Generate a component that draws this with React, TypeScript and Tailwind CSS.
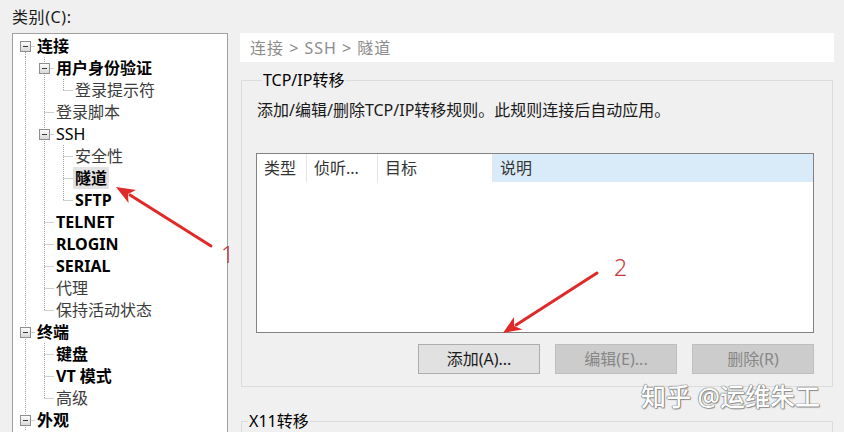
import React from 'react';

type Row = {
  text: string;
  level: number;
  cols: string[];
  box?: boolean;
  bold?: boolean;
  dim?: boolean;
  selected?: boolean;
};

const rows: Row[] = [
  { text: '连接', level: 0, cols: ['D'], box: true, bold: true },
  { text: '用户身份验证', level: 1, cols: ['I', 'T'], box: true, bold: true },
  { text: '登录提示符', level: 2, cols: ['I', 'I', 'L'], dim: true },
  { text: '登录脚本', level: 1, cols: ['I', 'T'], dim: true },
  { text: 'SSH', level: 1, cols: ['I', 'T'], box: true },
  { text: '安全性', level: 2, cols: ['I', 'I', 'T'], dim: true },
  { text: '隧道', level: 2, cols: ['I', 'I', 'T'], bold: true, selected: true },
  { text: 'SFTP', level: 2, cols: ['I', 'I', 'L'], bold: true },
  { text: 'TELNET', level: 1, cols: ['I', 'T'], bold: true },
  { text: 'RLOGIN', level: 1, cols: ['I', 'T'], bold: true },
  { text: 'SERIAL', level: 1, cols: ['I', 'T'], bold: true },
  { text: '代理', level: 1, cols: ['I', 'T'], dim: true },
  { text: '保持活动状态', level: 1, cols: ['I', 'L'], dim: true },
  { text: '终端', level: 0, cols: ['T'], box: true, bold: true },
  { text: '键盘', level: 1, cols: ['I', 'T'], bold: true },
  { text: 'VT 模式', level: 1, cols: ['I', 'T'], bold: true },
  { text: '高级', level: 1, cols: ['I', 'L'], dim: true },
  { text: '外观', level: 0, cols: ['T'], box: true, bold: true },
];

const COL = 19;

function Gutter({ cols, box }: { cols: string[]; box?: boolean }) {
  const w = cols.length * COL;
  const last = cols.length - 1;
  return (
    <svg width={w} height={22} className="shrink-0">
      {cols.map((c, i) => {
        const cx = i * COL + 9.5;
        const dash = { stroke: '#a0a0a0', strokeDasharray: '1 1', strokeWidth: 1 };
        return (
          <g key={i}>
            {c === 'I' && <line x1={cx} y1={0} x2={cx} y2={22} {...dash} />}
            {c === 'T' && <line x1={cx} y1={0} x2={cx} y2={22} {...dash} />}
            {c === 'L' && <line x1={cx} y1={0} x2={cx} y2={11} {...dash} />}
            {c === 'D' && <line x1={cx} y1={11} x2={cx} y2={22} {...dash} />}
            {c !== 'I' && <line x1={cx} y1={11.5} x2={(i + 1) * COL} y2={11.5} {...dash} />}
          </g>
        );
      })}
      {box && (
        <g>
          <defs>
            <linearGradient id="bx" x1="0" y1="0" x2="0" y2="1">
              <stop offset="0" stopColor="#ffffff" />
              <stop offset="1" stopColor="#d6d6d6" />
            </linearGradient>
          </defs>
          <rect x={last * COL + 4.5} y={6.5} width={10} height={10} fill="url(#bx)" stroke="#8e8f8f" />
          <line x1={last * COL + 7} y1={11.5} x2={last * COL + 12} y2={11.5} stroke="#3a3a3a" />
        </g>
      )}
    </svg>
  );
}

function TreeRow({ row }: { row: Row }) {
  return (
    <div className="flex h-[22px] items-center">
      <Gutter cols={row.cols} box={row.box} />
      <span
        className={
          'px-[2px] leading-[22px] whitespace-nowrap ' +
          (row.bold ? 'font-bold text-black ' : '') +
          (row.dim ? 'text-[#3c3c3c] ' : '') +
          (row.selected ? 'bg-[#e3e3e3] ' : '')
        }
      >
        {row.text}
      </span>
    </div>
  );
}

function Button({ label, disabled }: { label: string; disabled?: boolean }) {
  return (
    <div
      className={
        disabled
          ? 'w-[122px] h-[30px] flex items-center justify-center border border-[#bfbfbf] bg-[#cccccc] text-[#878787]'
          : 'w-[122px] h-[30px] flex items-center justify-center border border-[#adadad] bg-[#e1e1e1] text-[#1a1a1a]'
      }
    >
      {label}
    </div>
  );
}

export default function App() {
  return (
    <div className="relative w-[844px] h-[432px] overflow-hidden bg-[#f0f0f0] text-[16px] text-black font-['Noto_Sans','Noto_Sans_CJK_SC',sans-serif]">
      <div className="flex pl-[12px]">
        {/* left: category tree */}
        <div className="w-[216px] shrink-0">
          <div className="h-[33px] pt-[7px] leading-[20px] tracking-[0.6px] text-[#1a1a1a]">类别(C):</div>
          <div className="h-[420px] border border-[#a0a0a0] bg-white pt-[1px] pl-[3px]">
            {rows.map((r) => (
              <TreeRow key={r.text} row={r} />
            ))}
          </div>
        </div>

        {/* right: settings panel */}
        <div className="ml-[12px] w-[594px] shrink-0 pt-[33px]">
          <div className="h-[29px] bg-white pl-[10px] flex items-center tracking-[1px] text-[#8c8c8c]">
            连接 &gt; SSH &gt; 隧道
          </div>

          <fieldset className="mt-[8px] mx-[1px] border border-[#dcdcdc] pl-[14px] pb-[12px]">
            <legend className="ml-[6px] px-[1px] leading-[20px]">TCP/IP转移</legend>
            <div className="mt-[10px] ml-[1px] leading-[20px] text-[#1a1a1a]">
              添加/编辑/删除TCP/IP转移规则。此规则连接后自动应用。
            </div>
            <div className="mt-[33px] w-[558px] h-[180px] border border-[#828282] bg-white">
              <div className="flex h-[28px] text-[#333]">
                <div className="w-[50px] pl-[7px] flex items-center border-r border-[#e5e5e5]">类型</div>
                <div className="w-[71px] pl-[7px] flex items-center border-r border-[#e5e5e5]">侦听...</div>
                <div className="w-[115px] pl-[7px] flex items-center border-r border-[#e5e5e5]">目标</div>
                <div className="flex-1 pl-[7px] flex items-center bg-[#d9ebf9]">说明</div>
              </div>
            </div>
            <div className="mt-[11px] w-[558px] flex justify-end gap-[15px]">
              <Button label="添加(A)..." />
              <Button label="编辑(E)..." disabled />
              <Button label="删除(R)" disabled />
            </div>
          </fieldset>

          <fieldset className="mt-[24px] mx-[1px] h-[60px] border border-[#dcdcdc]">
            <legend className="ml-[6px] px-[1px] leading-[20px]">X11转移</legend>
          </fieldset>
        </div>
      </div>

      {/* annotation arrows */}
      <svg className="absolute inset-0 pointer-events-none" width={844} height={432}>
        <line x1={211} y1={246} x2={130} y2={195} stroke="#e02a2a" strokeWidth={3} strokeLinecap="round" />
        <polygon points="116,187 136,190 128,194 128.5,203" fill="#e02a2a" />
        <line x1={597} y1={273} x2={516} y2={325} stroke="#e02a2a" strokeWidth={3} strokeLinecap="round" />
        <polygon points="503,333 514,317 514,326 522.5,329.5" fill="#e02a2a" />
      </svg>
      <div className="absolute left-[221px] top-[239px] text-[23px] leading-[30px] font-light text-[#c8383e] font-['Noto_Sans',sans-serif]">1</div>
      <div className="absolute left-[614px] top-[252px] text-[23px] leading-[30px] font-light text-[#c8383e] font-['Noto_Sans',sans-serif]">2</div>

      {/* watermark */}
      <div className="absolute left-[641px] top-[381px] text-[25px] leading-[30px] font-medium text-white whitespace-nowrap [text-shadow:0_0_1px_#6e6e6e,0_0_1px_#6e6e6e,0_0_1px_#6e6e6e,1px_1px_1px_#9a9a9a]">
        知乎 @运维朱工
      </div>
    </div>
  );
}
